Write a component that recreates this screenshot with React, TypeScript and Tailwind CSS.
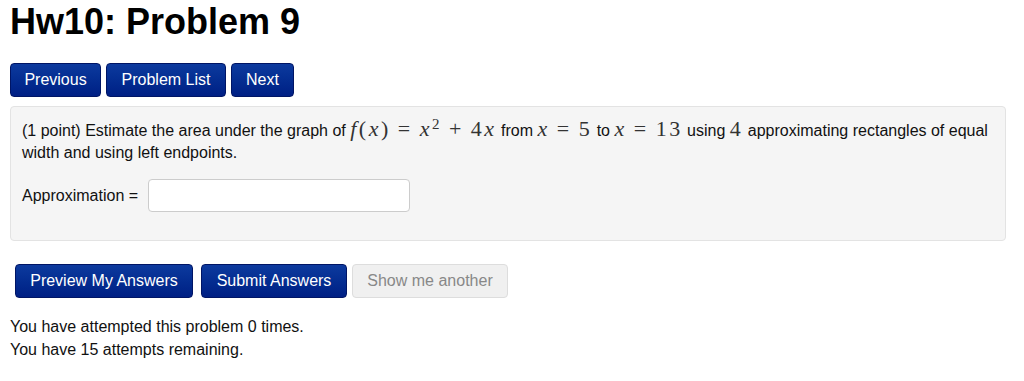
import React from "react";

const sans = { fontFamily: '"Liberation Sans", Arial, Helvetica, sans-serif' };

function M({ children }: { children: React.ReactNode }) {
  return (
    <span
      className="text-[22px] leading-[16px] text-[#333] tracking-[2.5px]"
      style={{ fontFamily: '"Liberation Serif", "Times New Roman", serif' }}
    >
      {children}
    </span>
  );
}

function I({ children }: { children: React.ReactNode }) {
  return <i>{children}</i>;
}

function Eq() {
  return <span className="mx-[7px]">=</span>;
}

function Plus() {
  return <span className="mx-[7px]">+</span>;
}

function BlueBtn({ children, className = "" }: { children: React.ReactNode; className?: string }) {
  return (
    <button
      className={
        "h-[34px] rounded-[4px] border border-[#001565] bg-gradient-to-b from-[#0d3a9e] to-[#001f84] text-[16px] text-white " +
        className
      }
    >
      {children}
    </button>
  );
}

export default function App() {
  return (
    <div className="bg-white text-[#111] px-[10px] pt-[1px] pb-4 w-[1024px] h-[381px] overflow-hidden" style={sans}>
      <h1 className="text-[36px] font-bold leading-[40px] mt-[1px] text-black">Hw10: Problem 9</h1>
      <div className="flex gap-[5px] mt-[21px]">
        <BlueBtn className="w-[91px]">Previous</BlueBtn>
        <BlueBtn className="w-[120px]">Problem List</BlueBtn>
        <BlueBtn className="w-[63px]">Next</BlueBtn>
      </div>
      <div className="mt-[9px] w-[996px] h-[135px] rounded-[4px] border border-[#e3e3e3] bg-[#f5f5f5] px-[11px] pt-[13px] text-[16px]">
        <p className="leading-[22px]">
          (1 point) Estimate the area under the graph of{" "}
          <M>
            <I>f</I>(<I>x</I>)<Eq />
            <I>x</I>
            <sup className="text-[15px]">2</sup>
            <Plus />4<I>x</I>
          </M>{" "}
          from{" "}
          <M>
            <I>x</I>
            <Eq />5
          </M>{" "}
          to{" "}
          <M>
            <I>x</I>
            <Eq />13
          </M>{" "}
          using <M>4</M> approximating rectangles of equal width and using left endpoints.
        </p>
        <div className="flex items-center mt-[15px]">
          <span>Approximation =</span>
          <input
            className="ml-[10px] w-[262px] h-[33px] rounded-[4px] border border-[#cccccc] bg-white"
            type="text"
          />
        </div>
      </div>
      <div className="flex ml-[5px] mt-[23px]">
        <BlueBtn className="w-[178px]">Preview My Answers</BlueBtn>
        <BlueBtn className="w-[146px] ml-[8px]">Submit Answers</BlueBtn>
        <button className="ml-[5px] h-[34px] w-[156px] rounded-[4px] border border-[#dddddd] bg-[#f0f0f0] text-[16px] text-[#888]">
          Show me another
        </button>
      </div>
      <div className="mt-[17px] text-[16px] leading-[23px]">
        <div>You have attempted this problem 0 times.</div>
        <div>You have 15 attempts remaining.</div>
      </div>
    </div>
  );
}
